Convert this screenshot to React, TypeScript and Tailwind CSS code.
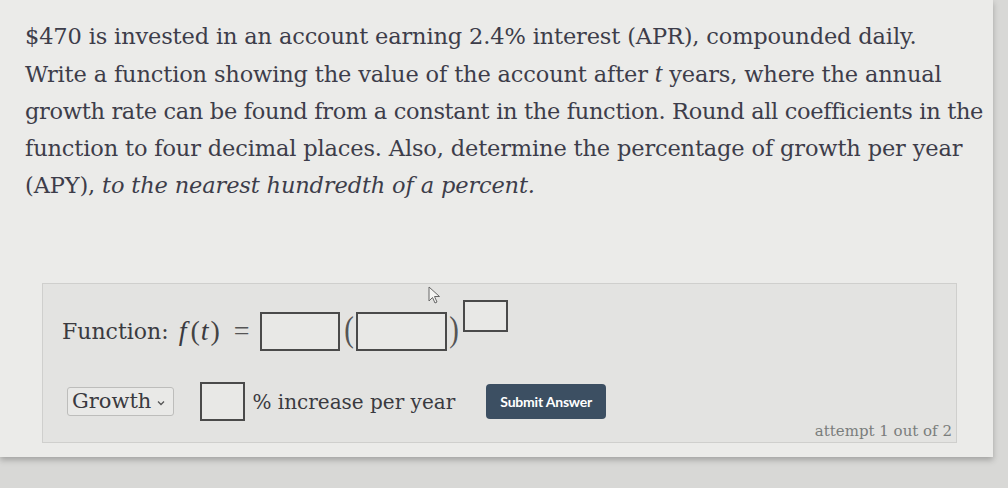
import React from "react";

const serif = { fontFamily: '"DejaVu Serif", Georgia, serif' };
const math = { fontFamily: '"Liberation Serif", "Times New Roman", serif' };

function Blank({ className = "" }: { className?: string }) {
  return <span className={`inline-block border-2 border-[#4a4a4a] bg-[#e8e8e6] ${className}`} />;
}

function Paren({ children }: { children: string }) {
  return (
    <span className="text-[36px] leading-none text-[#555] font-light -mt-[3px] inline-block scale-x-[0.8]" style={math}>
      {children}
    </span>
  );
}

export default function App() {
  return (
    <div className="w-[1008px] h-[488px] bg-[#d8d8d6] overflow-hidden relative" style={serif}>
      {/* Card */}
      <div className="w-[993px] h-[457px] bg-[#ebebe9] shadow-[0_3px_6px_rgba(0,0,0,0.25)] pt-[18px] pl-[25px]">
        <div className="text-[22.5px] leading-[37px] text-[#3d3d4a] tracking-[-0.15px] whitespace-nowrap">
          <div>$470 is invested in an account earning 2.4% interest (APR), compounded daily.</div>
          <div>
            Write a function showing the value of the account after{" "}
            <i style={math} className="text-[27px]">t</i> years, where the annual
          </div>
          <div className="tracking-[-0.32px]">
            growth rate can be found from a constant in the function. Round all coefficients in the
          </div>
          <div>function to four decimal places. Also, determine the percentage of growth per year</div>
          <div>
            (APY), <i>to the nearest hundredth of a percent.</i>
          </div>
        </div>

        {/* Answer panel */}
        <div className="mt-[79px] ml-[17px] w-[915px] h-[160px] bg-[#e3e3e1] border border-[#cfcfcd] relative">
          <div className="flex items-center h-[40px] mt-[27px] pl-[19px] text-[#3a3a40]">
            <span className="text-[22px]">Function:</span>
            <span className="ml-[10px] text-[28px] flex items-center" style={math}>
              <i>f</i>
              <span className="ml-[4px] text-[#444]">(</span>
              <i className="ml-[1px]">t</i>
              <span className="ml-[2px] text-[#444]">)</span>
            </span>
            <span className="ml-[14px] text-[28px] text-[#555]" style={math}>=</span>
            <Blank className="ml-[10px] w-[80px] h-[39px]" />
            <span className="ml-[3px]"><Paren>(</Paren></span>
            <Blank className="ml-[1px] w-[91px] h-[39px]" />
            <span className="ml-[1px]"><Paren>)</Paren></span>
            <Blank className="ml-[3px] w-[45px] h-[32px] self-start -mt-[11px]" />
          </div>

          <div className="flex items-center mt-[31px] pl-[24px] text-[#3a3a40]">
            <div className="flex items-center h-[29px] pl-[4px] pr-[7px] border border-[#bdbdbb] rounded-[3px] bg-[#e9e9e7]">
              <span className="text-[21px]">Growth</span>
              <svg width="10" height="8" viewBox="0 0 10 8" className="ml-[5px] mt-[2px]">
                <path d="M2 2.5 L5 5.5 L8 2.5" fill="none" stroke="#555" strokeWidth="1.3" />
              </svg>
            </div>
            <Blank className="ml-[26px] w-[45px] h-[39px]" />
            <span className="ml-[7px] text-[20px]">% increase per year</span>
            <button
              className="ml-[31px] w-[120px] h-[35px] rounded-[4px] bg-[#3c4f62] text-white text-[14px] font-bold tracking-[-0.2px]"
              style={{ fontFamily: "Lato, sans-serif" }}
            >
              Submit Answer
            </button>
          </div>

          <div className="absolute right-[4px] bottom-[0px] text-[15px] text-[#7a7d7c]">
            attempt 1 out of 2
          </div>
        </div>
      </div>

      {/* mouse cursor */}
      <svg className="absolute left-[428px] top-[286px]" width="16" height="20" viewBox="0 0 16 20">
        <path d="M1 1 L1 15 L4.5 11.5 L7 17 L9 16 L6.5 10.5 L11.5 10.5 Z" fill="#f4f4f2" stroke="#666" strokeWidth="1" />
      </svg>
    </div>
  );
}
